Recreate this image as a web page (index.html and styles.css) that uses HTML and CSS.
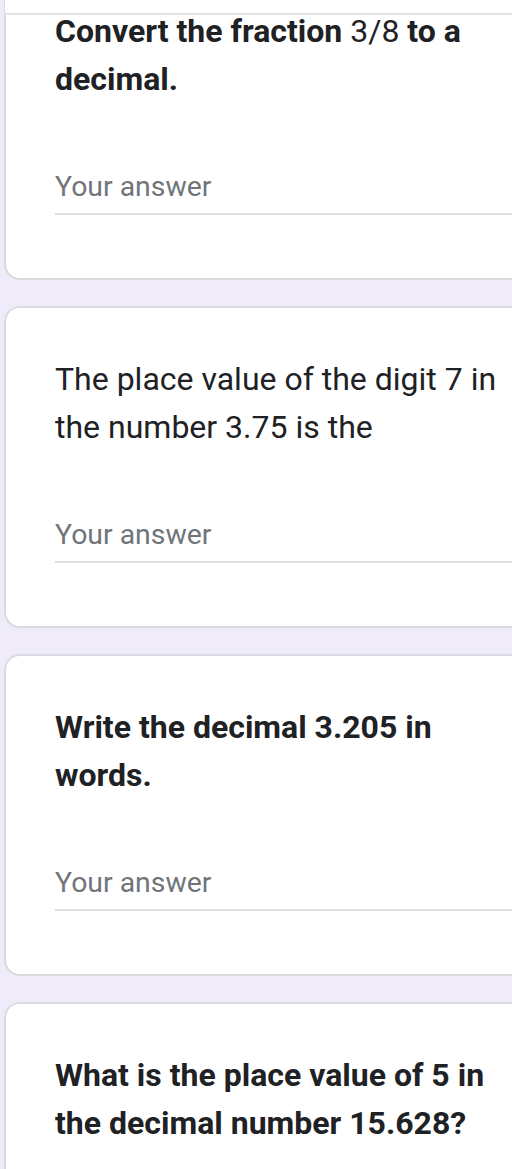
FILE: index.html
```html
<!DOCTYPE html>
<html lang="en">
<head>
<meta charset="utf-8">
<title>Quiz</title>
<link rel="stylesheet" href="styles.css">
</head>
<body>
<div class="topbar"></div>
<main class="list">
  <section class="card">
    <h2 class="q bold">Convert the fraction <span class="reg">3/8</span> to a decimal.</h2>
    <div class="answer">Your answer</div>
  </section>
  <section class="card">
    <h2 class="q">The place value of the digit 7 in the number 3.75 is the</h2>
    <div class="answer">Your answer</div>
  </section>
  <section class="card">
    <h2 class="q bold">Write the decimal 3.205 in words.</h2>
    <div class="answer">Your answer</div>
  </section>
  <section class="card">
    <h2 class="q bold">What is the place value of 5 in the decimal number 15.628?</h2>
    <div class="answer">Your answer</div>
  </section>
</main>
</body>
</html>
```
FILE: styles.css
```css
html, body {
  margin: 0;
  padding: 0;
  overflow: hidden;
}
body {
  background: #f0ebf8;
  font-family: Roboto, "Liberation Sans", Arial, sans-serif;
  width: 512px;
  height: 1169px;
}
.topbar {
  position: fixed;
  top: 0;
  left: 5px;
  width: 600px;
  height: 13px;
  background: #ffffff;
  border-bottom: 2px solid #e2e2e4;
  z-index: 2;
}
.list {
  display: flex;
  flex-direction: column;
  gap: 26px;
  margin-top: -42px;
  padding-left: 4px;
}
.card {
  box-sizing: border-box;
  width: 620px;
  background: #ffffff;
  border: 2px solid #dcdae1;
  border-right: none;
  border-radius: 16px 0 0 16px;
  padding: 47px 0 63px 49px;
}
.q {
  margin: 0;
  width: 458px;
  font-size: 32px;
  line-height: 48px;
  font-weight: 400;
  color: #202124;
  letter-spacing: 0;
}
.q.bold {
  font-weight: 700;
}
.q .reg {
  font-weight: 400;
}
.answer {
  margin-top: 64px;
  font-size: 28.4px;
  line-height: 40px;
  color: #70757a;
  padding-bottom: 6px;
  border-bottom: 2px solid #e0e0e0;
}
```
